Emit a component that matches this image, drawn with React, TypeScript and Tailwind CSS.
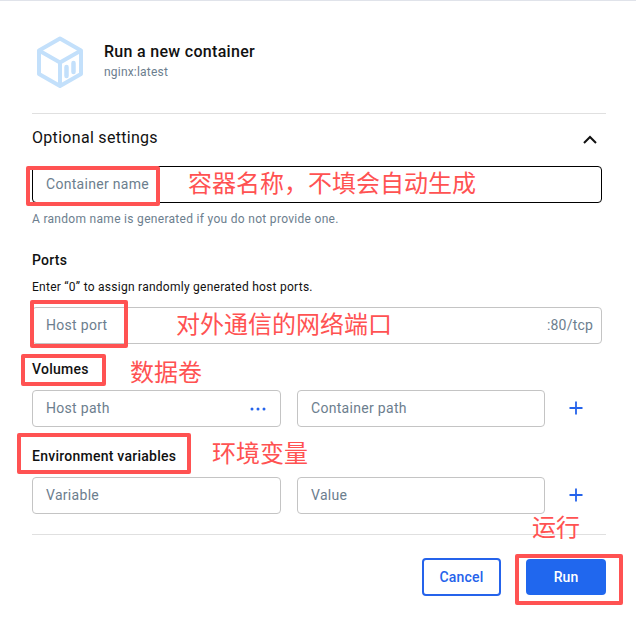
import React from "react";

const sans = "font-['Roboto','Noto_Sans_CJK_SC',sans-serif]";

function Field({ placeholder, className = "", children }: { placeholder: string; className?: string; children?: React.ReactNode }) {
  return (
    <div className={`flex h-[37px] items-center rounded-[4px] border border-[#c4c4c4] pl-[13px] pr-[8px] ${className}`}>
      <span className="flex-1 text-[14px] tracking-[0.3px] text-[#6c7e8e]">{placeholder}</span>
      {children}
    </div>
  );
}

function Plus() {
  return (
    <div className="flex w-[61px] items-center justify-center pb-[2px] pl-[1px]">
      <svg width="14" height="14" viewBox="0 0 14 14" fill="none" stroke="#2563eb" strokeWidth="1.8">
        <path d="M7 0.5V13.5M0.5 7H13.5" />
      </svg>
    </div>
  );
}

function Mark({ className }: { className: string }) {
  return <div className={`absolute rounded-[2px] border-[4px] border-[#ff5252] ${className}`} />;
}

function Note({ className, children }: { className: string; children: React.ReactNode }) {
  return (
    <div className={`absolute whitespace-nowrap text-[24px] leading-[32px] text-[#ff5252] ${className}`}>{children}</div>
  );
}

export default function App() {
  return (
    <div className={`relative h-[628px] w-[636px] overflow-hidden border-t border-[#e0e3ea] bg-white ${sans}`}>
      <div className="pl-[32px] pr-[30px]">
        <header className="flex h-[112px] items-start pt-[35px]">
          <svg width="48" height="52" viewBox="0 0 48 52" fill="none" stroke="#c3e0fb" strokeWidth="4" strokeLinejoin="round" className="ml-[4px]">
            <path d="M24 2.5 45 14.5V38L24 50 3 38V14.5Z" />
            <path d="M3 14.5 24 26.5 45 14.5M24 26.5V50" />
            <path d="M30.5 31V40M37.5 27V36" strokeWidth="4.5" strokeLinecap="round" />
          </svg>
          <div className="ml-[20px] pt-[6px]">
            <div className="text-[16px] font-medium leading-[20px] tracking-[0.3px] text-[#111]">Run a new container</div>
            <div className="mt-[2px] text-[12px] leading-[16px] tracking-[0.2px] text-[#6c7e8e]">nginx:latest</div>
          </div>
        </header>
        <div className="h-px w-[574px] bg-[#e0e0e0]" />
        <div className="flex h-[52px] w-[574px] items-center justify-between pb-[4px]">
          <span className="text-[16px] tracking-[0.3px] text-[#111]">Optional settings</span>
          <svg width="14" height="9" viewBox="0 0 14 9" fill="none" stroke="#111" strokeWidth="2" className="mr-[9px] mt-[2px]">
            <path d="M1 8 7 2 13 8" />
          </svg>
        </div>
        <div className="flex h-[37px] w-[570px] items-center rounded-[4px] border border-black pl-[13px]">
          <span className="text-[14px] tracking-[0.3px] text-[#6c7e8e]">Container name</span>
        </div>
        <p className="mt-[8px] text-[12px] leading-[16px] tracking-[0.3px] text-[#6c7e8e]">A random name is generated if you do not provide one.</p>
        <h3 className="mt-[24px] text-[14px] font-medium leading-[18px] tracking-[0.25px] text-[#111]">Ports</h3>
        <p className="mt-[10px] text-[12px] leading-[16px] tracking-[0.26px] text-[#111]">Enter “0” to assign randomly generated host ports.</p>
        <Field placeholder="Host port" className="mt-[12px] w-[570px]">
          <span className="text-[14px] tracking-[0.2px] text-[#6c7e8e]">:80/tcp</span>
        </Field>
        <h3 className="mt-[16px] text-[14px] font-medium leading-[18px] tracking-[0.25px] text-[#111]">Volumes</h3>
        <div className="mt-[12px] flex">
          <Field placeholder="Host path" className="w-[249px]">
            <svg width="16" height="4" viewBox="0 0 16 4" fill="#2563eb" className="mr-[6px]">
              <circle cx="2" cy="2" r="1.5" />
              <circle cx="8" cy="2" r="1.5" />
              <circle cx="14" cy="2" r="1.5" />
            </svg>
          </Field>
          <Field placeholder="Container path" className="ml-[16px] w-[248px]" />
          <Plus />
        </div>
        <h3 className="mt-[20px] text-[14px] font-medium leading-[18px] tracking-[0.25px] text-[#111]">Environment variables</h3>
        <div className="mt-[12px] flex">
          <Field placeholder="Variable" className="w-[249px]" />
          <Field placeholder="Value" className="ml-[16px] w-[248px]" />
          <Plus />
        </div>
        <div className="mt-[20px] h-px w-[574px] bg-[#e0e0e0]" />
        <div className="mt-[23px] flex w-[574px] items-center justify-end">
          <button className="h-[38px] w-[79px] rounded-[4px] border-2 border-[#2563eb] text-[14px] font-medium tracking-[0.2px] text-[#2563eb]">Cancel</button>
          <button className="ml-[25px] h-[36px] w-[80px] rounded-[4px] bg-[#2067ee] text-[14px] font-medium text-white">Run</button>
        </div>
      </div>

      <Mark className="left-[26px] top-[165px] h-[40px] w-[134px]" />
      <Mark className="left-[30px] top-[299px] h-[48px] w-[98px]" />
      <Mark className="left-[21px] top-[353px] h-[32px] w-[85px]" />
      <Mark className="left-[17px] top-[432px] h-[41px] w-[174px]" />
      <Mark className="left-[515px] top-[553px] h-[51px] w-[108px]" />

      <Note className="left-[188px] top-[167px]">容器名称，不填会自动生成</Note>
      <Note className="left-[176px] top-[308px]">对外通信的网络端口</Note>
      <Note className="left-[130px] top-[356px]">数据卷</Note>
      <Note className="left-[212px] top-[437px]">环境变量</Note>
      <Note className="left-[532px] top-[511px]">运行</Note>
    </div>
  );
}
